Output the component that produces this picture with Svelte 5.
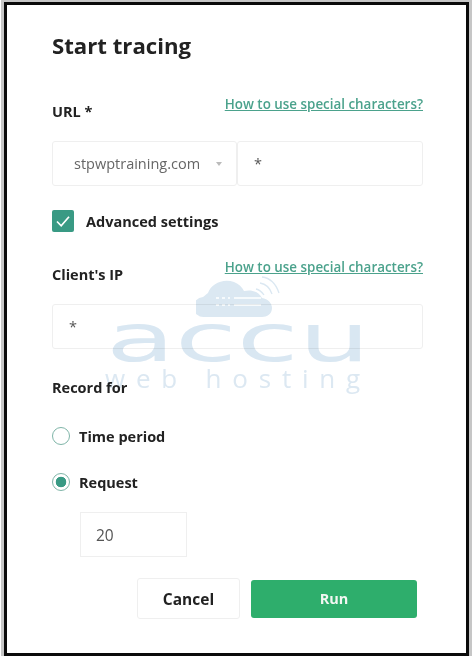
<script>
  let host = $state("stpwptraining.com");
  let path = $state("*");
  let clientIp = $state("*");
  let advanced = $state(true);
  let recordFor = $state("request");
  let requests = $state(20);
  const helpText = "How to use special characters?";
</script>

<div class="frame">
  <div class="dialog">
    <h1>Start tracing</h1>

    <div class="label-row url-label">
      <span class="label">URL *</span>
      <a href="#help" class="help">{helpText}</a>
    </div>
    <div class="url-fields">
      <div class="field select">
        <span>{host}</span>
        <i class="caret"></i>
      </div>
      <input class="field" bind:value={path} />
    </div>

    <label class="check">
      <input type="checkbox" bind:checked={advanced} />
      <span class="box">
        <svg viewBox="0 0 22 22" width="22" height="22">
          <path d="M5 11.5l4.2 4.3L17 6.8" fill="none" stroke="#fff" stroke-width="1.7" />
        </svg>
      </span>
      Advanced settings
    </label>

    <div class="label-row ip-label">
      <span class="label">Client's IP</span>
      <a href="#help" class="help">{helpText}</a>
    </div>
    <input class="field ip" bind:value={clientIp} />

    <div class="label record">Record for</div>

    <label class="radio first">
      <input type="radio" value="time" bind:group={recordFor} />
      <span class="dot"></span>
      Time period
    </label>
    <label class="radio">
      <input type="radio" value="request" bind:group={recordFor} />
      <span class="dot"></span>
      Request
    </label>
    <input class="field count" bind:value={requests} />

    <div class="actions">
      <button class="cancel">Cancel</button>
      <button class="run">Run</button>
    </div>

    <div class="watermark" aria-hidden="true">
      <svg class="cloud" viewBox="0 0 92 50" width="92" height="50">
        <path d="M8 42a10 10 0 0 1-1-20c2-1 3-3 5-4 3-9 15-15 26-11 5 2 8 5 10 9 8-2 15 1 18 7 6 1 10 5 10 10 0 6-5 9-10 9z" fill="#dbe8f2" />
        <g stroke="#fff" stroke-width="1.6" fill="none">
          <path d="M20 23h3M26 23h3M32 23h2M38 23h27M20 30h3M26 30h3M32 30h2M38 30h27" />
        </g>
        <g stroke="#dbe8f2" stroke-width="1.3" fill="none">
          <path d="M64 8c6 1 10 5 12 11M66 2c8 1 14 7 17 16M60 14c4 1 6 3 8 6" />
        </g>
      </svg>
      <svg class="accu" viewBox="0 0 252 40" width="252" height="40">
        <text x="-6" y="36" textLength="264" lengthAdjust="spacingAndGlyphs">accu</text>
      </svg>
      <div class="web">web hosting</div>
    </div>
  </div>
</div>

<style>
  :global(body) {
    margin: 0;
    background: #fff;
  }

  .frame {
    box-sizing: border-box;
    width: 465px;
    height: 654px;
    margin: 2px 5px 0 4px;
    border: 3px solid #0a0a0a;
    outline: 3px solid #c6c6c6;
    background: #fff;
    font-family: "Open Sans", sans-serif;
    color: #222;
  }

  .dialog {
    position: relative;
    box-sizing: border-box;
    height: 100%;
    padding: 26px 43px 0 45px;
  }

  h1 {
    margin: 0;
    font-size: 22.2px;
    line-height: 30px;
    font-weight: 700;
  }

  .label-row {
    display: flex;
    justify-content: space-between;
    align-items: flex-start;
  }

  .url-label {
    margin-top: 34px;
  }

  .ip-label {
    margin-top: 26px;
  }

  .label {
    font-size: 14.5px;
    line-height: 20px;
    font-weight: 700;
    padding-top: 7px;
  }

  .help {
    font-size: 13.4px;
    line-height: 18px;
    font-weight: 600;
    color: #4ba28c;
  }

  .url-fields {
    display: flex;
    margin-top: 19px;
  }

  .field {
    box-sizing: border-box;
    height: 45px;
    border: 1px solid #efefef;
    border-radius: 3px;
    background: #fff;
    font: 14.5px "Open Sans", sans-serif;
    color: #555;
    outline: none;
  }

  .url-fields .field {
    width: 186px;
    padding: 0 16px;
  }

  .select {
    display: flex;
    align-items: center;
    justify-content: space-between;
    padding: 0 14px 0 21px !important;
    flex: none;
    width: 185px !important;
    color: #666;
  }

  .caret {
    width: 0;
    height: 0;
    border: 3px solid transparent;
    border-top: 4px solid #bbb;
    border-bottom: 0;
  }

  .check {
    display: flex;
    align-items: center;
    gap: 12px;
    margin-top: 24px;
    height: 22px;
    font-size: 14.5px;
    font-weight: 700;
  }

  .check input,
  .radio input {
    display: none;
  }

  .box {
    display: block;
    width: 22px;
    height: 22px;
    border-radius: 2px;
    background: #399a84;
  }

  .box svg {
    display: block;
  }

  .ip {
    display: block;
    width: 371px;
    margin-top: 19px;
    padding: 0 16px;
  }

  .record {
    margin-top: 22px;
  }

  .radio {
    display: flex;
    align-items: center;
    gap: 9px;
    height: 20px;
    margin-top: 26px;
    font-size: 14.5px;
    font-weight: 700;
  }

  .radio.first {
    margin-top: 28px;
  }

  .dot {
    box-sizing: border-box;
    flex: none;
    width: 18px;
    height: 18px;
    border: 1px solid #7fb5a8;
    border-radius: 50%;
    background: #fff;
  }

  .radio input:checked + .dot {
    background: radial-gradient(circle, #399a84 0 5px, #fff 5.6px);
  }

  .count {
    display: block;
    width: 107px;
    margin: 20px 0 0 28px;
    padding: 0 15px;
    border-radius: 0;
    font-size: 15.5px;
  }

  .actions {
    display: flex;
    gap: 11px;
    margin: 21px 6px 0 85px;
    align-items: center;
  }

  button {
    font-family: "Open Sans", sans-serif;
    font-size: 15.5px;
    font-weight: 700;
    border-radius: 3px;
    cursor: pointer;
  }

  .cancel {
    width: 103px;
    height: 41px;
    border: 1px solid #efefef;
    background: #fff;
    color: #222;
  }

  .run {
    width: 166px;
    height: 38px;
    border: 0;
    background: #2eae6c;
    color: #f2f7f2;
    font-size: 14.5px;
  }

  .watermark {
    position: absolute;
    left: 105px;
    top: 270px;
    width: 252px;
    display: flex;
    flex-direction: column;
    align-items: center;
    pointer-events: none;
    mix-blend-mode: multiply;
  }

  .cloud {
    display: block;
    margin-left: 8px;
  }

  .accu {
    display: block;
    overflow: visible;
  }

  .accu text {
    font-family: "DejaVu Sans", sans-serif;
    font-size: 66px;
    fill: #d9e7f2;
  }

  .web {
    margin-top: -1px;
    font-family: "Open Sans", sans-serif;
    font-size: 26px;
    line-height: 28px;
    letter-spacing: 10.8px;
    white-space: nowrap;
    color: #dce8f2;
  }
</style>
